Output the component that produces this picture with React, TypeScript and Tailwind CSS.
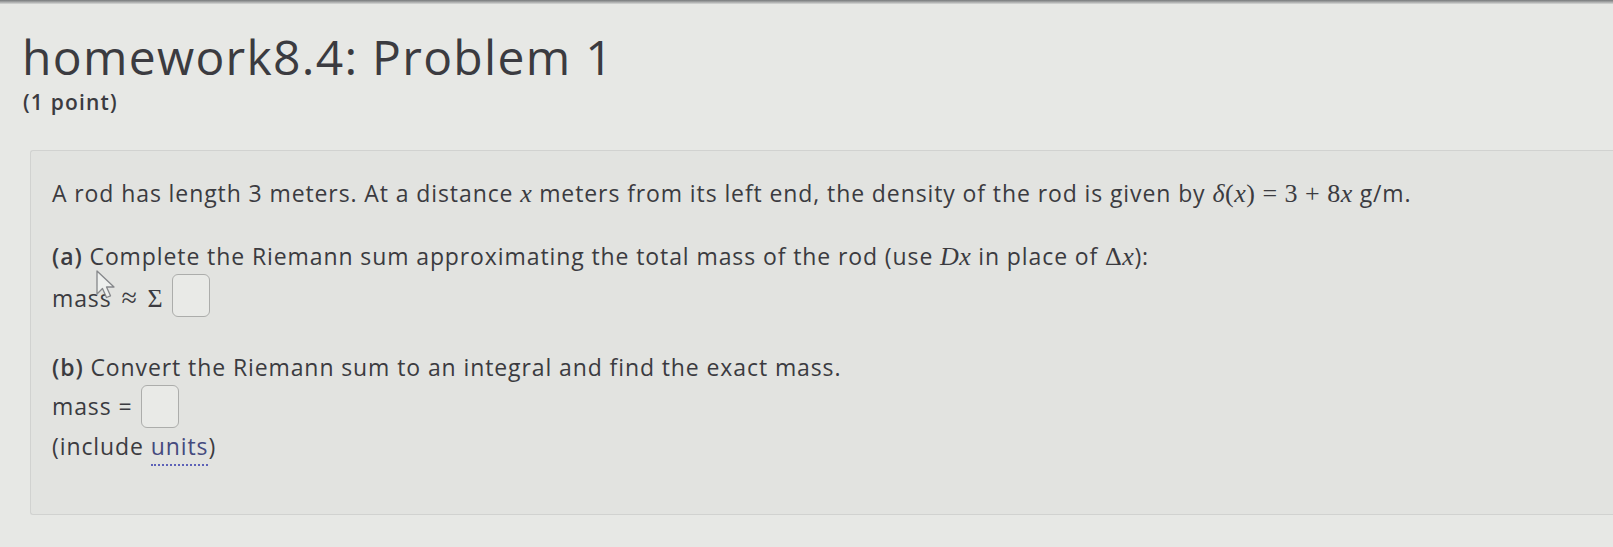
const sans = { fontFamily: '"Open Sans", "Noto Sans", sans-serif' };

function M({ children }: { children: React.ReactNode }) {
  return <span className="font-['Liberation_Serif',serif] text-[26px] tracking-[0.5px]">{children}</span>;
}

function AnswerBox() {
  return <span className="inline-block w-[38px] h-[43px] rounded-[6px] border border-[#acadab] bg-[#e9eae7]" />;
}

export default function App() {
  return (
    <div className="min-h-[547px] w-[1613px] bg-[#e7e8e5] text-[#3b3b40] overflow-hidden" style={sans}>
      <div className="h-[4px] bg-gradient-to-b from-[#77797b] to-[#d8d9d7]" />
      <div className="pl-[22px] pt-[25px]">
        <h1 className="text-[48px] leading-[56px] tracking-[1.3px]">homework8.4: Problem 1</h1>
        <p className="text-[21px] leading-[26px] font-semibold tracking-[1.2px] mt-[4px] ml-[1px]">(1 point)</p>
      </div>
      <div className="ml-[30px] mt-[35px] border border-[#d1d2d0] border-r-0 rounded-l-[3px] bg-[#e2e3e0] pl-[21px] pt-[27px] pb-[53px] text-[23px] leading-[30px] tracking-[0.9px]">
        <p>
          A rod has length 3 meters. At a distance <M><i>x</i></M> meters from its left end, the density of the rod is given by{' '}
          <M><i>δ</i>(<i>x</i>) = 3 + 8<i>x</i></M> g/m.
        </p>
        <p className="mt-[32px]">
          <b className="font-semibold">(a)</b> Complete the Riemann sum approximating the total mass of the rod (use{' '}
          <M><i>Dx</i></M> in place of <M>Δ<i>x</i></M>):
        </p>
        <div className="relative mt-[4px] flex items-center h-[44px]">
          <span>mass</span>
          <M>
            <span className="ml-[10px] text-[28px]">≈</span>
            <span className="ml-[10px]">Σ</span>
          </M>
          <span className="ml-[9px]"><AnswerBox /></span>
          <svg className="absolute left-[43px] top-[-6px]" width="26" height="32" viewBox="0 0 26 32">
            <path d="M2 1 L2 24 L7.5 18.5 L11.5 27.5 L15.5 25.8 L11.5 17 L19 17 Z" fill="#eef0ee" stroke="#85878a" strokeWidth="1.3" strokeLinejoin="round" />
          </svg>
        </div>
        <p className="mt-[32px]">
          <b className="font-semibold">(b)</b> Convert the Riemann sum to an integral and find the exact mass.
        </p>
        <div className="mt-[2px] flex items-center gap-[8px] h-[44px]">
          <span>mass =</span>
          <AnswerBox />
        </div>
        <p className="mt-[3px]">
          (include{' '}
          <span className="text-[#454a7e] border-b-2 border-dotted border-[#5d62b8] pb-[2px]">units</span>)
        </p>
      </div>
    </div>
  );
}
